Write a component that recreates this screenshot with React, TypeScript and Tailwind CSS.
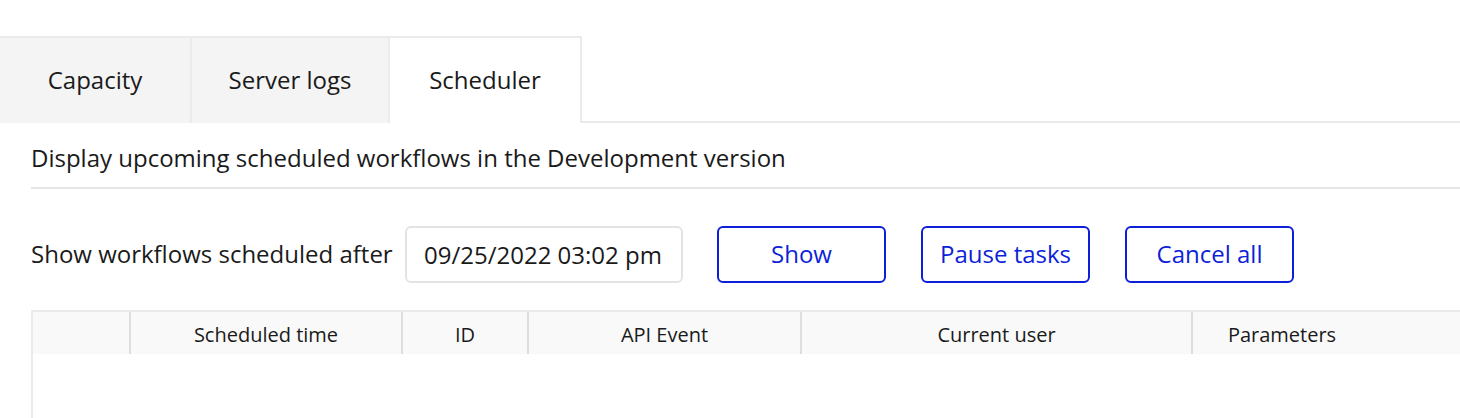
import React from "react";

const font = { fontFamily: '"Open Sans", "Noto Sans", sans-serif' };

export default function App() {
  const cols = [
    { w: 98, label: "" },
    { w: 272, label: "Scheduled time" },
    { w: 126, label: "ID" },
    { w: 273, label: "API Event" },
    { w: 391, label: "Current user" },
    { w: 178, label: "Parameters" },
  ];
  return (
    <div className="w-[1460px] h-[418px] bg-white overflow-hidden text-[#1a1a1a]" style={font}>
      <div className="h-[36px]" />
      {/* Tabs */}
      <div className="flex h-[87px]">
        <div className="w-[192px] bg-[#f4f4f4] border-t-2 border-r-2 border-[#ebebeb] flex items-center justify-center text-[24px] pb-[2px]">
          Capacity
        </div>
        <div className="w-[196px] bg-[#f4f4f4] border-t-2 border-[#ebebeb] flex items-center justify-center text-[24px] pb-[2px]">
          Server logs
        </div>
        <div className="w-[194px] bg-white border-t-2 border-l-2 border-r-2 border-[#ebebeb] flex items-center justify-center text-[24px] pb-[2px]">
          Scheduler
        </div>
        <div className="flex-1 border-b-2 border-[#ebebeb]" />
      </div>
      {/* Content */}
      <div className="pl-[31px]">
        <div className="h-[66px] flex items-center border-b-2 border-[#e6e6e6] text-[24px] pt-[6px]">
          Display upcoming scheduled workflows in the Development version
        </div>
        <div className="h-[37px]" />
        <div className="flex items-center h-[57px]">
          <div className="text-[24px] w-[374px] pb-[2px]">Show workflows scheduled after</div>
          <div className="w-[278px] h-[57px] border-2 border-[#e3e3e3] rounded-[6px] flex items-center pl-[17px] text-[24px]">
            09/25/2022 03:02 pm
          </div>
          <div className="flex gap-[35px] ml-[34px]">
            {["Show", "Pause tasks", "Cancel all"].map((t) => (
              <button
                key={t}
                className="w-[169px] h-[57px] border-2 border-[#0d1fd8] rounded-[6px] text-[#0d1fd8] text-[24px] flex items-center justify-center pb-[2px]"
                style={font}
              >
                {t}
              </button>
            ))}
          </div>
        </div>
        <div className="h-[27px]" />
        {/* Table */}
        <div className="border-l-2 border-t-2 border-[#ebebeb] h-[120px]">
          <div className="flex h-[42px] bg-[#f9f9f9]">
            {cols.map((c, i) => (
              <div
                key={i}
                className={`flex items-center justify-center text-[20px] pt-[4px] ${i < cols.length - 1 ? "border-r-2 border-[#dedede]" : ""}`}
                style={{ width: c.w }}
              >
                {c.label}
              </div>
            ))}
            <div className="flex-1" />
          </div>
        </div>
      </div>
    </div>
  );
}
